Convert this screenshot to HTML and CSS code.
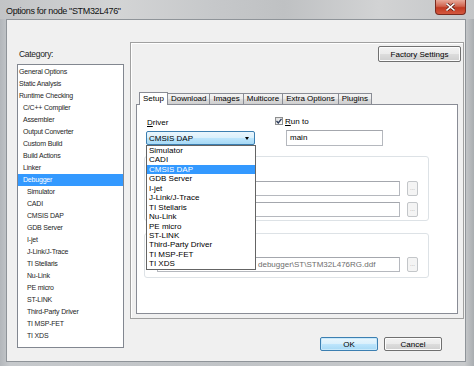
FILE: index.html
```html
<!DOCTYPE html>
<html lang="en">
<head>
    <meta charset="UTF-8">
    <title>Options for node "STM32L476"</title>
    <link rel="stylesheet" href="styles.css">
</head>
<body>
    <div class="window">
        <div class="titlebar">
            <span class="title">Options for node "STM32L476"</span>
            <span class="close">
                <svg width="9" height="8" viewBox="0 0 9 8">
                    <path d="M1 1 L8 7 M8 1 L1 7" stroke="#5a1a10" stroke-width="3" stroke-linecap="square"/>
                    <path d="M1 1 L8 7 M8 1 L1 7" stroke="#fff" stroke-width="1.6" stroke-linecap="square"/>
                </svg>
            </span>
        </div>
        <div class="client">
            <div class="left">
                <div class="cat-label">Category:</div>
                <ul class="cat-list">
                    <li>General Options</li>
                    <li>Static Analysis</li>
                    <li>Runtime Checking</li>
                    <li class="lvl1">C/C++ Compiler</li>
                    <li class="lvl1">Assembler</li>
                    <li class="lvl1">Output Converter</li>
                    <li class="lvl1">Custom Build</li>
                    <li class="lvl1">Build Actions</li>
                    <li class="lvl1">Linker</li>
                    <li class="lvl1 sel">Debugger</li>
                    <li class="lvl2">Simulator</li>
                    <li class="lvl2">CADI</li>
                    <li class="lvl2">CMSIS DAP</li>
                    <li class="lvl2">GDB Server</li>
                    <li class="lvl2">I-jet</li>
                    <li class="lvl2">J-Link/J-Trace</li>
                    <li class="lvl2">TI Stellaris</li>
                    <li class="lvl2">Nu-Link</li>
                    <li class="lvl2">PE micro</li>
                    <li class="lvl2">ST-LINK</li>
                    <li class="lvl2">Third-Party Driver</li>
                    <li class="lvl2">TI MSP-FET</li>
                    <li class="lvl2">TI XDS</li>
                </ul>
            </div>
            <div class="right">
                <div class="panel">
                    <div class="panel-top">
                        <button class="btn factory">Factory Settings</button>
                    </div>
                    <div class="tabs">
                        <span class="tab active">Setup</span>
                        <span class="tab">Download</span>
                        <span class="tab">Images</span>
                        <span class="tab">Multicore</span>
                        <span class="tab">Extra Options</span>
                        <span class="tab">Plugins</span>
                    </div>
                    <div class="pane">
                        <div class="top-row">
                            <div class="driver">
                                <div class="lbl"><u>D</u>river</div>
                                <div class="combo">
                                    <span>CMSIS DAP</span>
                                    <span class="arrow"></span>
                                    <ul class="dropdown">
                                        <li>Simulator</li>
                                        <li>CADI</li>
                                        <li class="sel">CMSIS DAP</li>
                                        <li>GDB Server</li>
                                        <li>I-jet</li>
                                        <li>J-Link/J-Trace</li>
                                        <li>TI Stellaris</li>
                                        <li>Nu-Link</li>
                                        <li>PE micro</li>
                                        <li>ST-LINK</li>
                                        <li>Third-Party Driver</li>
                                        <li>TI MSP-FET</li>
                                        <li>TI XDS</li>
                                    </ul>
                                </div>
                            </div>
                            <div class="runto">
                                <div class="chk-row">
                                    <span class="chk">
                                        <svg width="6" height="6" viewBox="0 0 6 6">
                                            <path d="M0.5 3 L2.3 5 L5.5 0.8" fill="none" stroke="#2a3a5a" stroke-width="1.3"/>
                                        </svg>
                                    </span>
                                    <span><u>R</u>un to</span>
                                </div>
                                <div class="field runto-field">main</div>
                            </div>
                        </div>

                        <div class="group g1">
                            <div class="file-row">
                                <div class="field"></div>
                                <span class="browse">...</span>
                            </div>
                            <div class="file-row">
                                <div class="field"></div>
                                <span class="browse">...</span>
                            </div>
                        </div>

                        <div class="group g2">
                            <div class="file-row">
                                <div class="field disabled">debugger\ST\STM32L476RG.ddf</div>
                                <span class="browse">...</span>
                            </div>
                        </div>
                    </div>
                </div>
                <div class="actions">
                    <button class="btn default">OK</button>
                    <button class="btn">Cancel</button>
                </div>
            </div>
        </div>
    </div>
</body>
</html>
```

FILE: styles.css
```css
body {
    margin: 0;
    font-family: "Liberation Sans", Arial, sans-serif;
    font-size: 8px;
    color: #000;
    background: #bfc2c5;
    overflow: hidden;
}
.window {
    width: 474px;
    height: 366px;
    display: flex;
    flex-direction: column;
    background: linear-gradient(90deg, #b3b7bb, #c6c9cc 2%, #c1c4c7 50%, #c8cacc 98%, #a9adb1);
}
.titlebar {
    height: 19px;
    display: flex;
    align-items: flex-start;
    background: linear-gradient(90deg, #c2c4c6, #d3d4d5 25%, #c6c8ca 45%, #bfc1c3 60%, #d2d3d4 80%, #c4c6c8);
}
.title {
    margin: 5px 0 0 6px;
    line-height: 12px;
    font-size: 9px;
    letter-spacing: -0.35px;
    color: #111;
}
.close {
    margin-left: auto;
    margin-right: 8px;
    width: 31px;
    height: 15px;
    box-sizing: border-box;
    border: 1px solid #7a2a1e;
    border-top: none;
    border-radius: 0 0 4px 4px;
    background: linear-gradient(#e8a999, #d0644f 45%, #c03a22 55%, #d4583f);
    display: flex;
    align-items: center;
    justify-content: center;
}
.client {
    flex: 1;
    margin: 0 8px 4px 6px;
    border: 1px solid #8f9499;
    background: #f0f0f0;
    display: flex;
}

/* category tree */
.left {
    width: 107px;
    margin: 0 6px 0 10px;
}
.cat-label {
    margin-top: 28px;
    margin-bottom: 4px;
    line-height: 12px;
    font-size: 8.5px;
    letter-spacing: -0.3px;
    padding-left: 2px;
    color: #222;
}
.cat-list {
    list-style: none;
    margin: 0;
    padding: 1px 0 0;
    height: 284px;
    box-sizing: border-box;
    border: 1px solid #828790;
    background: #fff;
}
.cat-list li {
    height: 12px;
    line-height: 12px;
    font-size: 7px;
    letter-spacing: -0.2px;
    padding-left: 1px;
    color: #1e1e1e;
    white-space: nowrap;
}
.cat-list li.lvl1 { padding-left: 5px; }
.cat-list li.lvl2 { padding-left: 9px; }
.cat-list li.sel {
    background: #3399ff;
    color: #fff;
}

/* right side */
.right {
    width: 334px;
    padding-top: 22px;
}
.panel {
    height: 277px;
    box-sizing: border-box;
    border: 1px solid #a0a0a0;
    box-shadow: inset 1px 1px #fff;
    padding: 0 5px 4px;
    display: flex;
    flex-direction: column;
}
.panel-top {
    display: flex;
    justify-content: flex-end;
    padding: 3px 2px 0 0;
    margin-right: -5px;
}
.btn {
    font-family: inherit;
    font-size: 8px;
    color: #000;
    height: 16px;
    padding: 0;
    box-sizing: border-box;
    border: 1px solid #707070;
    border-radius: 2px;
    background: linear-gradient(#f2f2f2, #ebebeb 50%, #dddddd 50%, #cfcfcf);
    box-shadow: inset 0 0 0 1px #fcfcfc;
}
.factory { width: 83px; }

.tabs {
    display: flex;
    align-items: flex-end;
    margin-top: 30px;
    padding-left: 3px;
    height: 12px;
    position: relative;
    z-index: 1;
}
.tab {
    height: 10px;
    line-height: 10px;
    padding: 0 3px;
    border: 1px solid #898c95;
    border-bottom: none;
    border-left: none;
    background: linear-gradient(#f3f3f3, #ebebeb 50%, #dddddd 50%, #cfcfcf);
    white-space: nowrap;
}
.tab:first-child { border-left: 1px solid #898c95; }
.tab.active {
    height: 12px;
    line-height: 11px;
    margin-bottom: -1px;
    background: #fff;
}
.pane {
    height: 210px;
    box-sizing: border-box;
    border: 1px solid #898c95;
    background: #fff;
    padding-top: 13px;
}
.top-row {
    display: flex;
    padding-left: 9px;
}
.driver { width: 109px; }
.lbl {
    line-height: 10px;
    padding-left: 1px;
    margin-bottom: 3px;
}
.combo {
    position: relative;
    height: 14px;
    box-sizing: border-box;
    border: 1px solid #3c7fb1;
    border-radius: 2px;
    background: linear-gradient(#eaf6fd, #d9f0fc 50%, #bee6fd 50%, #a7d9f5);
    display: flex;
    align-items: center;
    padding-left: 2px;
}
.arrow {
    margin-left: auto;
    margin-right: 5px;
    border-left: 2.5px solid transparent;
    border-right: 2.5px solid transparent;
    border-top: 3px solid #000;
}
.dropdown {
    position: absolute;
    top: 100%;
    left: -1px;
    width: 110px;
    margin: 1px 0 0;
    padding: 0;
    list-style: none;
    box-sizing: border-box;
    border: 1px solid #646464;
    background: #fff;
    z-index: 5;
}
.dropdown li {
    height: 9.44px;
    line-height: 9.44px;
    padding-left: 2px;
    white-space: nowrap;
}
.dropdown li.sel {
    background: #3399ff;
    color: #fff;
}

.runto { margin-left: 20px; }
.chk-row {
    display: flex;
    align-items: center;
    height: 10px;
    gap: 2px;
    margin-top: -2px;
}
.chk {
    width: 8px;
    height: 8px;
    box-sizing: border-box;
    border: 1px solid #8e8f8f;
    background: linear-gradient(135deg, #dcdcdc, #fff);
    display: flex;
    align-items: center;
    justify-content: center;
}
.field {
    height: 15px;
    box-sizing: border-box;
    border: 1px solid #b5b8be;
    border-top-color: #a4a7ad;
    background: #fff;
    line-height: 13px;
    padding-left: 3px;
    white-space: nowrap;
    overflow: hidden;
}
.runto-field {
    width: 97px;
    height: 16px;
    margin: 4px 0 0 11px;
    line-height: 14px;
}

.group {
    margin-left: 7px;
    width: 285px;
    box-sizing: border-box;
    border: 1px solid #dde2e6;
    border-radius: 3px;
    padding: 0 10px 0 12px;
}
.g1 { height: 65px; margin-top: 10px; padding-top: 24px; }
.g2 { height: 45px; margin-top: 12px; padding-top: 23px; }
.file-row {
    display: flex;
    gap: 7px;
}
.file-row + .file-row { margin-top: 6px; }
.file-row .field { flex: 1; }
.field.disabled {
    color: #6d6d6d;
    padding-left: 100px;
}
.browse {
    width: 11px;
    height: 15px;
    box-sizing: border-box;
    border: 1px solid #c3c6c9;
    border-radius: 2px;
    background: #f4f4f4;
    color: #9a9a9a;
    font-size: 6px;
    line-height: 13px;
    text-align: center;
}

.actions {
    display: flex;
    justify-content: flex-end;
    gap: 6px;
    margin-top: 18px;
    padding-right: 22px;
}
.actions .btn {
    width: 58px;
    height: 14px;
}
.btn.default {
    border-color: #3c7fb1;
    background: linear-gradient(#eaf6fd, #d9f0fc 50%, #bee6fd 50%, #a7d9f5);
    box-shadow: inset 0 0 0 1px #c8e9fb;
}
```
